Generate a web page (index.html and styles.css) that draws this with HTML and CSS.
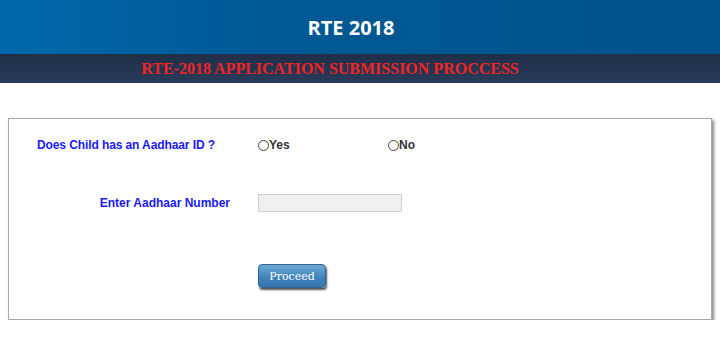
FILE: index.html
```html
<!DOCTYPE html>
<html lang="en">
<head>
    <meta charset="UTF-8">
    <meta name="viewport" content="width=device-width, initial-scale=1.0">
    <title>RTE 2018</title>
    <link rel="stylesheet" href="styles.css">
</head>
<body>
    <div class="top-header">
        <h1>RTE 2018</h1>
    </div>
    <div class="sub-header">
        <span>RTE-2018 APPLICATION SUBMISSION PROCCESS</span>
    </div>

    <div class="form-box">
        <div class="form-row">
            <label class="label-left">Does Child has an Aadhaar ID ?</label>
            <div class="radio-group">
                <label class="radio-item yes"><input type="radio" name="aadhaar" value="yes">Yes</label>
                <label class="radio-item"><input type="radio" name="aadhaar" value="no">No</label>
            </div>
        </div>
        <div class="form-row row-number">
            <label class="label-right" for="aadhaar-no">Enter Aadhaar Number</label>
            <input type="text" id="aadhaar-no" class="text-input">
        </div>
        <div class="form-row row-button">
            <span class="label-right"></span>
            <button class="btn-proceed">Proceed</button>
        </div>
    </div>
</body>
</html>
```

FILE: styles.css
```css
body {
    margin: 0;
    font-family: Arial, "Liberation Sans", sans-serif;
    background: #fff;
}
.top-header {
    height: 54px;
    background: linear-gradient(to right, #0069ab 0%, #005a95 35%, #00528a 100%);
    display: flex;
    align-items: center;
    justify-content: center;
}
.top-header h1 {
    margin: 0 18px 0 0;
    color: #fff;
    font-family: "Open Sans", sans-serif;
    font-size: 20px;
    font-weight: bold;
}
.sub-header {
    height: 29px;
    background: linear-gradient(to bottom, #212f47, #273b5a);
    display: flex;
    align-items: center;
    justify-content: center;
}
.sub-header span {
    margin-right: 60px;
    color: #f02424;
    font-family: "Liberation Serif", "Times New Roman", serif;
    font-size: 16px;
    font-weight: bold;
}
.form-box {
    margin: 35px 8px 0 8px;
    border: 1px solid #a8a8a8;
    box-shadow: 2px 2px 3px #888;
    padding-top: 17px;
    box-sizing: border-box;
    height: 202px;
}
.form-row {
    display: flex;
    align-items: center;
    height: 18px;
}
.form-row label, .form-row .label-right {
    color: #1a1aff;
    font-size: 12px;
    font-weight: bold;
}
.label-left {
    width: 221px;
    padding-left: 28px;
    letter-spacing: -0.1px;
}
.label-right {
    width: 221px;
    padding-right: 28px;
    text-align: right;
}
.radio-group {
    display: flex;
}
.form-row .radio-item {
    display: flex;
    align-items: center;
    color: #333;
    width: 130px;
}
.radio-item input {
    appearance: none;
    -webkit-appearance: none;
    width: 11px;
    height: 11px;
    margin: 0;
    border: 1px solid #444;
    border-radius: 50%;
    box-sizing: border-box;
}
.row-number {
    margin-top: 40px;
}
.text-input {
    width: 144px;
    height: 18px;
    box-sizing: border-box;
    border: 1px solid #cfcfcf;
    background: #efefef;
    margin: 0;
}
.row-button {
    margin-top: 52px;
    height: 24px;
}
.btn-proceed {
    width: 68px;
    height: 24px;
    border: 1px solid #2f6490;
    border-radius: 4px;
    background: linear-gradient(to bottom, #6aa8d4, #3f82bb 60%, #3675ab);
    box-shadow: 1px 2px 2px #555;
    color: #fff;
    font-family: "DejaVu Serif", Georgia, serif;
    font-size: 11px;
    padding: 0;
}
```
